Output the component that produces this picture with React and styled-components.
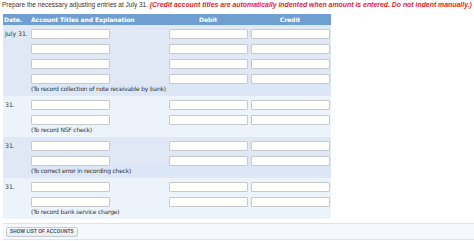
import React from "react";
import styled, { createGlobalStyle } from "styled-components";

const GlobalStyle = createGlobalStyle`
  html, body {
    margin: 0;
    padding: 0;
    background: #fff;
    font-family: "DejaVu Sans", Verdana, sans-serif;
  }
`;

const Page = styled.div`
  width: 474px;
  height: 241px;
  overflow: hidden;
  padding: 1px 0 0 2px;
  box-sizing: border-box;
`;

const Instructions = styled.p`
  margin: 0;
  font-family: "Liberation Sans", Arial, sans-serif;
  font-size: 6.5px;
  line-height: 8px;
  color: #333;
  white-space: nowrap;
`;

const Warning = styled.span`
  color: #e3222b;
  font-weight: bold;
  font-style: italic;
  font-size: 6.9px;
`;

const Table = styled.div`
  margin: 5px 0 0 1px;
  width: 328px;
`;

const cols = "27px 137px 82px 82px";

const HeaderRow = styled.div`
  display: grid;
  grid-template-columns: ${cols};
  height: 11px;
  align-items: center;
  background: #6f9fd1;
  color: #fff;
  font-family: "DejaVu Sans", Verdana, sans-serif;
  font-size: 6.1px;
  font-weight: bold;
  letter-spacing: -0.1px;
  white-space: nowrap;
`;

const HeadCell = styled.div`
  padding-left: ${(p) => (p.$center ? 0 : 1)}px;
  text-align: ${(p) => (p.$center ? "center" : "left")};
`;

const Entry = styled.div`
  display: grid;
  grid-template-columns: ${cols};
  row-gap: 5px;
  padding: 4px 0 2px;
  background: ${(p) => (p.$shaded ? "#dfe8f4" : "#edf3fb")};
`;

const DateLabel = styled.div`
  padding: 1px 0 0 2px;
  font-family: "DejaVu Sans", Verdana, sans-serif;
  font-size: 6.2px;
  line-height: 8px;
  color: #333;
  white-space: nowrap;
`;

const Field = styled.div`
  padding-left: ${(p) => p.$inset}px;
`;

const Input = styled.div`
  width: 79px;
  height: 10px;
  box-sizing: border-box;
  background: #fffffb;
  border: 1px solid #c7c9cc;
  border-radius: 1px;
`;

const Note = styled.div`
  grid-column: 2 / 5;
  margin-top: -5px;
  padding: 1px 0 0 1px;
  height: 9px;
  font-family: "DejaVu Sans", Verdana, sans-serif;
  font-size: 6px;
  letter-spacing: -0.2px;
  line-height: 8px;
  color: #333;
  white-space: nowrap;
  background: ${(p) => (p.$shaded ? "#dbe7f7" : "transparent")};
`;

const ButtonBar = styled.div`
  margin: 4px 0 0 1px;
  height: 15px;
  display: flex;
  align-items: center;
  padding-left: 3px;
  background: #f5f8fc;
  border-top: 1px solid #dfe4ea;
  border-bottom: 1px solid #dfe4ea;
`;

const Button = styled.div`
  height: 10px;
  box-sizing: border-box;
  padding: 0 3px;
  display: flex;
  align-items: center;
  border: 1px solid #c5cbd3;
  border-radius: 2px;
  background: linear-gradient(#fbfcfd, #e9edf2);
  font-family: "Liberation Sans", Arial, sans-serif;
  font-size: 4.7px;
  font-weight: bold;
  color: #3d4c66;
  letter-spacing: 0.1px;
`;

const entries = [
  { date: "July 31.", lines: 4, note: "(To record collection of note receivable by bank)" },
  { date: "31.", lines: 2, note: "(To record NSF check)" },
  { date: "31.", lines: 2, note: "(To correct error in recording check)" },
  { date: "31.", lines: 2, note: "(To record bank service charge)" },
];

export default function App() {
  return (
    <Page>
      <GlobalStyle />
      <Instructions>
        Prepare the necessary adjusting entries at July 31.{" "}
        <Warning>
          (Credit account titles are automatically indented when amount is
          entered. Do not indent manually.)
        </Warning>
      </Instructions>
      <Table>
        <HeaderRow>
          <HeadCell>Date.</HeadCell>
          <HeadCell>Account Titles and Explanation</HeadCell>
          <HeadCell $center>Debit</HeadCell>
          <HeadCell $center>Credit</HeadCell>
        </HeaderRow>
        {entries.map((entry, i) => (
          <Entry key={i} $shaded={i % 2 === 0}>
            {Array.from({ length: entry.lines }).map((_, j) => (
              <React.Fragment key={j}>
                <DateLabel>{j === 0 ? entry.date : ""}</DateLabel>
                <Field $inset={1}>
                  <Input />
                </Field>
                <Field $inset={2}>
                  <Input />
                </Field>
                <Field $inset={2}>
                  <Input />
                </Field>
              </React.Fragment>
            ))}
            <Note $shaded={i % 2 === 0}>{entry.note}</Note>
          </Entry>
        ))}
      </Table>
      <ButtonBar>
        <Button>SHOW LIST OF ACCOUNTS</Button>
      </ButtonBar>
    </Page>
  );
}
